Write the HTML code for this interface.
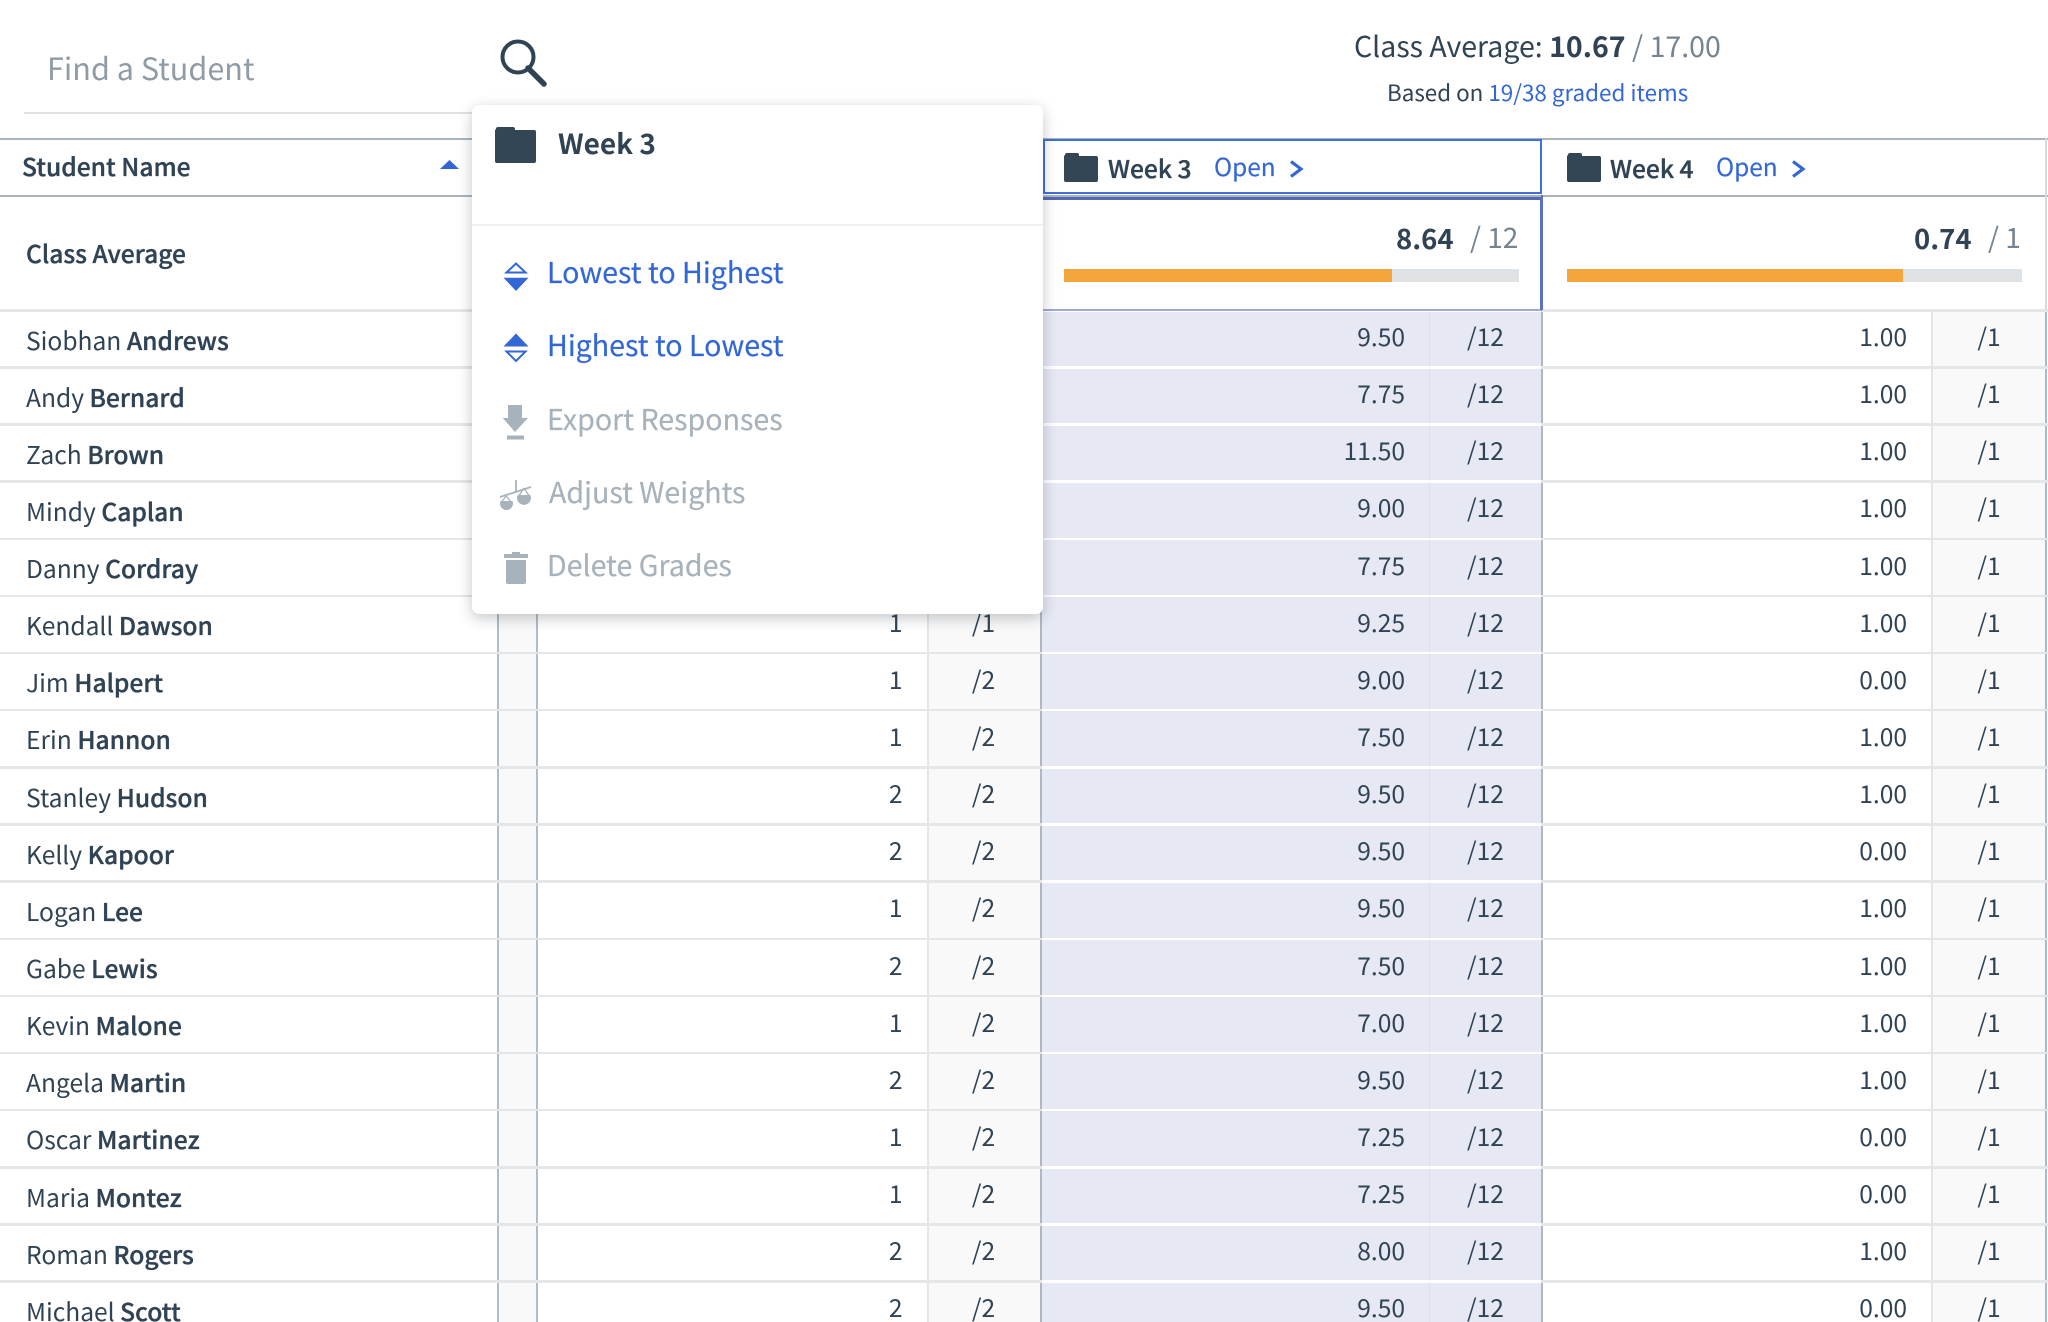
<!DOCTYPE html>
<html><head><meta charset="utf-8"><style>
html,body{margin:0;padding:0;background:#fff}
#p{position:relative;width:2048px;height:1322px;overflow:hidden;background:#fff;font-family:"Noto Sans CJK JP","Liberation Sans",sans-serif;color:#2f4354;font-size:24.6px}
#p span,#p div,#p svg{position:absolute}
#p span{white-space:nowrap;line-height:40px;height:40px}
#p b{font-weight:500;-webkit-text-stroke:.35px #2f4354}
#p b.h{font-weight:700;-webkit-text-stroke:0}
.r{left:0;width:2048px;height:57.14px}
.bg1{left:497px;width:41px;top:0;bottom:0;background:#f9f9f9;border-left:2px solid #b2bcc5;border-right:2px solid #b2bcc5;box-sizing:border-box}
.bg2{left:927px;width:113px;top:0;bottom:0;background:#f9f9f9;border-left:2px solid #e3e5e7;box-sizing:border-box}
.v{left:1040px;width:2px;top:0;bottom:0;background:#aeb8c2}
.bg3{left:1042px;width:500px;top:0;bottom:0;background:#e6e8f4}
.v3{left:1429px;width:1px;top:0;bottom:0;background:#dcdfeb}
.v4{left:1541px;width:2px;top:0;bottom:0;background:#aeb8c2}
.bg4{left:1931px;width:114px;top:0;bottom:0;background:#f9f9f9;border-left:2px solid #e3e5e7;box-sizing:border-box}
.v5{left:2045px;width:2px;top:0;bottom:0;background:#aeb8c2}
.l{left:0;width:2048px;top:-1px;height:2.5px;background:#e4e6e8}
.lw{left:1042px;width:499px;top:-1px;height:2.5px;background:#fff}
.n{left:26px;top:9.5px}
.a{left:700px;width:202.5px;text-align:right;top:6px}
.b{left:928px;width:111px;text-align:center;top:6px}
.c{left:1205px;width:200px;text-align:right;top:6px}
.d{left:1430px;width:111px;text-align:center;top:6px}
.e{left:1707px;width:200px;text-align:right;top:6px}
.f{left:1933px;width:112px;text-align:center;top:6px}
.hl{height:2px;background:#aab5be}
.blue{color:#3367d6}
.it{left:547px;font-size:28.6px;-webkit-text-stroke:.2px currentColor}
</style></head><body><div id="p">

<span style="left:47px;top:47px;font-size:30.6px;color:#8f9ba5">Find a Student</span>
<div style="left:24px;top:112px;width:450px;height:2px;background:#dfe2e5"></div>
<svg style="left:498px;top:38px" width="52" height="50" viewBox="0 0 52 50"><circle cx="20" cy="19" r="15.5" fill="none" stroke="#2f4354" stroke-width="4"/><path d="M30 30L46 46" stroke="#2f4354" stroke-width="5.5" stroke-linecap="round"/></svg>

<span style="left:1354px;top:26px;font-size:28.5px">Class Average: <b class="h">10.67</b> <span style="position:static;color:#74838f">/ 17.00</span></span>
<span style="left:1387px;top:72px;font-size:22.4px">Based on <span class="blue" style="position:static">19/38 graded items</span></span>

<!-- rows -->
<div class="r" style="top:310px"><div class="bg1"></div><div class="bg2"></div><div class="bg3"></div><div class="v3"></div><div class="v4"></div><div class="bg4"></div><div class="v5"></div><div class="v"></div><div class="l"></div><div class="lw"></div><span class="n">Siobhan <b>Andrews</b></span><span class="c">9.50</span><span class="d">/12</span><span class="e">1.00</span><span class="f">/1</span></div>
<div class="r" style="top:367.14px"><div class="bg1"></div><div class="bg2"></div><div class="bg3"></div><div class="v3"></div><div class="v4"></div><div class="bg4"></div><div class="v5"></div><div class="v"></div><div class="l"></div><div class="lw"></div><span class="n">Andy <b>Bernard</b></span><span class="c">7.75</span><span class="d">/12</span><span class="e">1.00</span><span class="f">/1</span></div>
<div class="r" style="top:424.28px"><div class="bg1"></div><div class="bg2"></div><div class="bg3"></div><div class="v3"></div><div class="v4"></div><div class="bg4"></div><div class="v5"></div><div class="v"></div><div class="l"></div><div class="lw"></div><span class="n">Zach <b>Brown</b></span><span class="c">11.50</span><span class="d">/12</span><span class="e">1.00</span><span class="f">/1</span></div>
<div class="r" style="top:481.42px"><div class="bg1"></div><div class="bg2"></div><div class="bg3"></div><div class="v3"></div><div class="v4"></div><div class="bg4"></div><div class="v5"></div><div class="v"></div><div class="l"></div><div class="lw"></div><span class="n">Mindy <b>Caplan</b></span><span class="c">9.00</span><span class="d">/12</span><span class="e">1.00</span><span class="f">/1</span></div>
<div class="r" style="top:538.56px"><div class="bg1"></div><div class="bg2"></div><div class="bg3"></div><div class="v3"></div><div class="v4"></div><div class="bg4"></div><div class="v5"></div><div class="v"></div><div class="l"></div><div class="lw"></div><span class="n">Danny <b>Cordray</b></span><span class="c">7.75</span><span class="d">/12</span><span class="e">1.00</span><span class="f">/1</span></div>
<div class="r" style="top:595.7px"><div class="bg1"></div><div class="bg2"></div><div class="bg3"></div><div class="v3"></div><div class="v4"></div><div class="bg4"></div><div class="v5"></div><div class="v"></div><div class="l"></div><div class="lw"></div><span class="n">Kendall <b>Dawson</b></span><span class="a">1</span><span class="b">/1</span><span class="c">9.25</span><span class="d">/12</span><span class="e">1.00</span><span class="f">/1</span></div>
<div class="r" style="top:652.84px"><div class="bg1"></div><div class="bg2"></div><div class="bg3"></div><div class="v3"></div><div class="v4"></div><div class="bg4"></div><div class="v5"></div><div class="v"></div><div class="l"></div><div class="lw"></div><span class="n">Jim <b>Halpert</b></span><span class="a">1</span><span class="b">/2</span><span class="c">9.00</span><span class="d">/12</span><span class="e">0.00</span><span class="f">/1</span></div>
<div class="r" style="top:709.98px"><div class="bg1"></div><div class="bg2"></div><div class="bg3"></div><div class="v3"></div><div class="v4"></div><div class="bg4"></div><div class="v5"></div><div class="v"></div><div class="l"></div><div class="lw"></div><span class="n">Erin <b>Hannon</b></span><span class="a">1</span><span class="b">/2</span><span class="c">7.50</span><span class="d">/12</span><span class="e">1.00</span><span class="f">/1</span></div>
<div class="r" style="top:767.12px"><div class="bg1"></div><div class="bg2"></div><div class="bg3"></div><div class="v3"></div><div class="v4"></div><div class="bg4"></div><div class="v5"></div><div class="v"></div><div class="l"></div><div class="lw"></div><span class="n">Stanley <b>Hudson</b></span><span class="a">2</span><span class="b">/2</span><span class="c">9.50</span><span class="d">/12</span><span class="e">1.00</span><span class="f">/1</span></div>
<div class="r" style="top:824.26px"><div class="bg1"></div><div class="bg2"></div><div class="bg3"></div><div class="v3"></div><div class="v4"></div><div class="bg4"></div><div class="v5"></div><div class="v"></div><div class="l"></div><div class="lw"></div><span class="n">Kelly <b>Kapoor</b></span><span class="a">2</span><span class="b">/2</span><span class="c">9.50</span><span class="d">/12</span><span class="e">0.00</span><span class="f">/1</span></div>
<div class="r" style="top:881.4px"><div class="bg1"></div><div class="bg2"></div><div class="bg3"></div><div class="v3"></div><div class="v4"></div><div class="bg4"></div><div class="v5"></div><div class="v"></div><div class="l"></div><div class="lw"></div><span class="n">Logan <b>Lee</b></span><span class="a">1</span><span class="b">/2</span><span class="c">9.50</span><span class="d">/12</span><span class="e">1.00</span><span class="f">/1</span></div>
<div class="r" style="top:938.54px"><div class="bg1"></div><div class="bg2"></div><div class="bg3"></div><div class="v3"></div><div class="v4"></div><div class="bg4"></div><div class="v5"></div><div class="v"></div><div class="l"></div><div class="lw"></div><span class="n">Gabe <b>Lewis</b></span><span class="a">2</span><span class="b">/2</span><span class="c">7.50</span><span class="d">/12</span><span class="e">1.00</span><span class="f">/1</span></div>
<div class="r" style="top:995.68px"><div class="bg1"></div><div class="bg2"></div><div class="bg3"></div><div class="v3"></div><div class="v4"></div><div class="bg4"></div><div class="v5"></div><div class="v"></div><div class="l"></div><div class="lw"></div><span class="n">Kevin <b>Malone</b></span><span class="a">1</span><span class="b">/2</span><span class="c">7.00</span><span class="d">/12</span><span class="e">1.00</span><span class="f">/1</span></div>
<div class="r" style="top:1052.82px"><div class="bg1"></div><div class="bg2"></div><div class="bg3"></div><div class="v3"></div><div class="v4"></div><div class="bg4"></div><div class="v5"></div><div class="v"></div><div class="l"></div><div class="lw"></div><span class="n">Angela <b>Martin</b></span><span class="a">2</span><span class="b">/2</span><span class="c">9.50</span><span class="d">/12</span><span class="e">1.00</span><span class="f">/1</span></div>
<div class="r" style="top:1109.96px"><div class="bg1"></div><div class="bg2"></div><div class="bg3"></div><div class="v3"></div><div class="v4"></div><div class="bg4"></div><div class="v5"></div><div class="v"></div><div class="l"></div><div class="lw"></div><span class="n">Oscar <b>Martinez</b></span><span class="a">1</span><span class="b">/2</span><span class="c">7.25</span><span class="d">/12</span><span class="e">0.00</span><span class="f">/1</span></div>
<div class="r" style="top:1167.1px"><div class="bg1"></div><div class="bg2"></div><div class="bg3"></div><div class="v3"></div><div class="v4"></div><div class="bg4"></div><div class="v5"></div><div class="v"></div><div class="l"></div><div class="lw"></div><span class="n">Maria <b>Montez</b></span><span class="a">1</span><span class="b">/2</span><span class="c">7.25</span><span class="d">/12</span><span class="e">0.00</span><span class="f">/1</span></div>
<div class="r" style="top:1224.24px"><div class="bg1"></div><div class="bg2"></div><div class="bg3"></div><div class="v3"></div><div class="v4"></div><div class="bg4"></div><div class="v5"></div><div class="v"></div><div class="l"></div><div class="lw"></div><span class="n">Roman <b>Rogers</b></span><span class="a">2</span><span class="b">/2</span><span class="c">8.00</span><span class="d">/12</span><span class="e">1.00</span><span class="f">/1</span></div>
<div class="r" style="top:1281.38px"><div class="bg1"></div><div class="bg2"></div><div class="bg3"></div><div class="v3"></div><div class="v4"></div><div class="bg4"></div><div class="v5"></div><div class="v"></div><div class="l"></div><div class="lw"></div><span class="n">Michael <b>Scott</b></span><span class="a">2</span><span class="b">/2</span><span class="c">9.50</span><span class="d">/12</span><span class="e">0.00</span><span class="f">/1</span></div>

<!-- header -->
<div class="hl" style="left:0;top:138px;width:2048px"></div>
<div class="hl" style="left:0;top:195px;width:2048px"></div>
<div style="left:2045px;top:138px;width:2px;height:172px;background:#d5dade"></div>
<div style="left:1541px;top:195px;width:2px;height:115px;background:#5a70c2"></div>
<span style="left:22px;top:146px;font-size:24.6px"><b>Student Name</b></span>
<svg style="left:440px;top:160px" width="19" height="9"><path d="M9.500 0L19 9H0Z" fill="#3367d6"/></svg>
<span style="left:26px;top:233px;font-size:24.6px"><b>Class Average</b></span>

<!-- week 3 header box -->
<div style="left:1043px;top:139px;width:499px;height:55px;box-sizing:border-box;border:2px solid #3f6fd8;background:#fff"></div>
<div style="left:1043px;top:197px;width:499px;height:114px;box-sizing:border-box;border-top:3px solid #5468b8;border-right:2px solid #5a70c2;border-bottom:2px solid #9ea9da;background:#fff"></div>
<svg style="left:1064px;top:152px" width="34" height="30" viewBox="0 0 34 30"><path d="M1 3Q1 1 3 1H13Q15 1 15 3V4H32Q34 4 34 6V28Q34 30 32 30H2Q0 30 0 28V4Z" fill="#324655"/></svg>
<span style="left:1108px;top:148px;font-size:24.6px"><b>Week 3</b></span>
<span class="blue" style="left:1214px;top:146.5px;font-size:24.4px;-webkit-text-stroke:.15px #3367d6">Open</span>
<svg style="left:1288px;top:158px" width="18" height="22"><path d="M3 3.500L13 11L3 18.500" fill="none" stroke="#3367d6" stroke-width="3.2"/></svg>
<span style="left:1396px;top:217px;font-size:27.5px"><b class="h">8.64</b></span>
<span style="left:1470px;top:217px;font-size:28px;color:#74838f">/ 12</span>
<div style="left:1064px;top:269px;width:455px;height:13px;background:#dfe2e5"></div>
<div style="left:1064px;top:269px;width:328px;height:13px;background:#f4a53c"></div>

<!-- week 4 header -->
<svg style="left:1567px;top:152px" width="34" height="30" viewBox="0 0 34 30"><path d="M1 3Q1 1 3 1H13Q15 1 15 3V4H32Q34 4 34 6V28Q34 30 32 30H2Q0 30 0 28V4Z" fill="#324655"/></svg>
<span style="left:1610px;top:148px;font-size:24.6px"><b>Week 4</b></span>
<span class="blue" style="left:1716px;top:146.5px;font-size:24.4px;-webkit-text-stroke:.15px #3367d6">Open</span>
<svg style="left:1790px;top:158px" width="18" height="22"><path d="M3 3.500L13 11L3 18.500" fill="none" stroke="#3367d6" stroke-width="3.2"/></svg>
<div style="left:2045px;top:138px;width:2px;height:58px;background:#d5dade"></div>
<span style="left:1914px;top:217px;font-size:27.5px"><b class="h">0.74</b></span>
<span style="left:1988px;top:217px;font-size:28px;color:#74838f">/ 1</span>
<div style="left:1567px;top:269px;width:455px;height:13px;background:#dfe2e5"></div>
<div style="left:1567px;top:269px;width:336px;height:13px;background:#f4a53c"></div>

<!-- menu -->
<div style="left:472px;top:105px;width:571px;height:509px;background:#fff;border-radius:7px;box-shadow:0 4px 14px rgba(40,50,60,.28)"></div>
<div style="left:472px;top:224px;width:571px;height:2px;background:#eff0f2"></div>
<svg style="left:495px;top:126px" width="41" height="37" viewBox="0 0 41 37"><path d="M1 3Q1 1 3 1H18Q20 1 20 3V4H39Q41 4 41 6V35Q41 37 39 37H2Q0 37 0 35V4Z" fill="#324655"/></svg>
<span style="left:558px;top:123px;font-size:28px"><b class="h">Week 3</b></span>

<svg style="left:502px;top:260px" width="28" height="32" viewBox="0 0 28 32"><path d="M14 3.500L23.500 12.500H4.500Z" fill="none" stroke="#3367d6" stroke-width="2"/><path d="M1.500 17.700H26.500L14 31Z" fill="#3367d6"/></svg>
<span class="it blue" style="top:252px">Lowest to Highest</span>
<svg style="left:502px;top:332px" width="28" height="32" viewBox="0 0 28 32"><path d="M14 1.500L26.500 14.500H1.500Z" fill="#3367d6"/><path d="M14 29L23.500 19.500H4.500Z" fill="none" stroke="#3367d6" stroke-width="2"/></svg>
<span class="it blue" style="top:325px">Highest to Lowest</span>
<svg style="left:502px;top:404px" width="28" height="37" viewBox="0 0 28 37"><path d="M6 1H20V14H26L13 28L0.700 14H6Z" fill="#a7b2bb"/><rect x="5" y="31.500" width="17" height="4" fill="#a7b2bb"/></svg>
<span class="it" style="top:399px;color:#a7b2bb">Export Responses</span>
<svg style="left:499px;top:478px" width="33" height="34" viewBox="0 0 33 34"><path d="M17 2V14M1 19L32 9" stroke="#a7b2bb" stroke-width="1.800" fill="none"/><path d="M7 18L1.500 25.500M7 18L13.500 25.500M25 10L18.500 20M25 10L31.500 20" stroke="#a7b2bb" stroke-width="1.300" fill="none"/><path d="M1.500 23H13.500A6.500 6.500 0 1 1 1.500 23Z" fill="#a7b2bb"/><path d="M18.600 17H31.400A7 7 0 1 1 18.600 17Z" fill="#a7b2bb"/></svg>
<span class="it" style="left:549px;top:472px;color:#a7b2bb">Adjust Weights</span>
<svg style="left:503px;top:551px" width="26" height="34" viewBox="0 0 26 34"><path d="M1 3H9V1H17V3H25V7H1Z" fill="#a7b2bb"/><path d="M3 9H23V31Q23 33 21 33H5Q3 33 3 31Z" fill="#a7b2bb"/></svg>
<span class="it" style="top:545px;color:#a7b2bb">Delete Grades</span>

</div></body></html>
